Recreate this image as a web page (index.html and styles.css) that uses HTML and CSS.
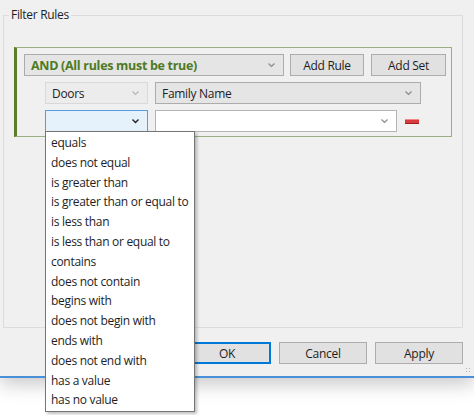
FILE: index.html
```html
<!DOCTYPE html>
<html lang="en">
<head>
    <meta charset="UTF-8">
    <title>Filter Rules</title>
    <link rel="stylesheet" href="styles.css">
</head>
<body>
    <div class="dialog">
        <fieldset class="group">
            <legend>Filter Rules</legend>

            <div class="rule-set">
                <div class="row">
                    <div class="combo combo-and">
                        <span class="combo-text">AND (All rules must be true)</span>
                        <svg class="chevron" width="7" height="5" viewBox="0 0 7 5"><path d="M0.5 0.5 L3.5 3.5 L6.5 0.5" fill="none" stroke="#8a8a8a" stroke-width="1.2"/></svg>
                    </div>
                    <button class="btn btn-add-rule">Add Rule</button>
                    <button class="btn btn-add-set">Add Set</button>
                </div>

                <div class="row indent">
                    <div class="combo combo-disabled combo-category">
                        <span class="combo-text">Doors</span>
                        <svg class="chevron" width="7" height="5" viewBox="0 0 7 5"><path d="M0.5 0.5 L3.5 3.5 L6.5 0.5" fill="none" stroke="#b5b5b5" stroke-width="1.2"/></svg>
                    </div>
                    <div class="combo combo-param">
                        <span class="combo-text">Family Name</span>
                        <svg class="chevron" width="7" height="5" viewBox="0 0 7 5"><path d="M0.5 0.5 L3.5 3.5 L6.5 0.5" fill="none" stroke="#8a8a8a" stroke-width="1.2"/></svg>
                    </div>
                </div>

                <div class="row indent">
                    <div class="combo combo-open combo-operator">
                        <span class="combo-text"></span>
                        <svg class="chevron" width="7" height="5" viewBox="0 0 7 5"><path d="M0.5 0.5 L3.5 3.5 L6.5 0.5" fill="none" stroke="#222" stroke-width="1.4"/></svg>

                        <ul class="dropdown">
                            <li>equals</li>
                            <li>does not equal</li>
                            <li>is greater than</li>
                            <li>is greater than or equal to</li>
                            <li>is less than</li>
                            <li>is less than or equal to</li>
                            <li>contains</li>
                            <li>does not contain</li>
                            <li>begins with</li>
                            <li>does not begin with</li>
                            <li>ends with</li>
                            <li>does not end with</li>
                            <li>has a value</li>
                            <li>has no value</li>
                        </ul>
                    </div>
                    <div class="combo combo-value">
                        <span class="combo-text"></span>
                        <svg class="chevron" width="7" height="5" viewBox="0 0 7 5"><path d="M0.5 0.5 L3.5 3.5 L6.5 0.5" fill="none" stroke="#8a8a8a" stroke-width="1.2"/></svg>
                    </div>
                    <span class="remove-rule"></span>
                </div>
            </div>
        </fieldset>

        <div class="footer">
            <button class="btn btn-footer btn-default">OK</button>
            <button class="btn btn-footer">Cancel</button>
            <button class="btn btn-footer">Apply</button>
        </div>
        <span class="grip"></span>
    </div>
</body>
</html>
```

FILE: styles.css
```css
body {
    margin: 0;
    background-color: #ffffff;
    font-family: 'Segoe UI', 'Open Sans', sans-serif;
    font-size: 12px;
    letter-spacing: -0.3px;
    color: #1e1e1e;
    width: 474px;
    height: 415px;
    overflow: hidden;
}
.dialog {
    position: relative;
    height: 378px;
    background-color: #f0f0f0;
    border-bottom: 2px solid #4a90d9;
    box-shadow: 0 6px 18px rgba(0, 0, 0, 0.22);
    padding-top: 7px;
    box-sizing: border-box;
}
.group {
    margin: 0 11px 0 3px;
    padding: 0 10px 0 10px;
    border: 1px solid #dcdcdc;
    height: 321px;
    box-sizing: border-box;
}
.group legend {
    padding: 0 2px;
    margin-left: -5px;
    line-height: 16px;
    color: #1e1e1e;
}
.rule-set {
    margin-top: 24px;
    border: 1px solid #9aaf82;
    border-left: 3px solid #5b7d2c;
    padding: 6px 5px 4px 7px;
    display: flex;
    flex-direction: column;
    gap: 6px;
}
.row {
    display: flex;
    align-items: center;
    gap: 7px;
}
.indent {
    padding-left: 21px;
}
.combo {
    position: relative;
    height: 22px;
    box-sizing: border-box;
    border: 1px solid #acacac;
    background-color: #e5e5e5;
    display: flex;
    align-items: center;
    justify-content: space-between;
    padding: 0 8px 0 6px;
}
.combo-text {
    white-space: nowrap;
}
.combo-and {
    width: 260px;
    margin-right: -1px;
}
.combo-and .combo-text {
    font-weight: bold;
    color: #4d7a22;
    font-size: 12.5px;
}
.combo-disabled {
    background-color: #ececec;
    border-color: #d9d9d9;
}
.combo-category {
    width: 103px;
}
.combo-param {
    width: 266px;
}
.combo-operator {
    width: 103px;
}
.combo-open {
    border-color: #569de5;
    background-color: #e5f1fb;
}
.combo-value {
    width: 242px;
    background-color: #ffffff;
    border-color: #b4b4b4;
}
.remove-rule {
    width: 14px;
    height: 3px;
    margin-left: 1px;
    background-color: #d83b3b;
    border-top: 1px solid #f08a8a;
    border-bottom: 1px solid #a02020;
}
.btn {
    font-family: inherit;
    font-size: 12px;
    letter-spacing: inherit;
    color: #1e1e1e;
    background-color: #e1e1e1;
    border: 1px solid #adadad;
    height: 22px;
    padding: 0;
    box-sizing: border-box;
}
.btn-add-rule {
    width: 74px;
}
.btn-add-set {
    width: 75px;
}
.dropdown {
    position: absolute;
    top: 20px;
    left: -1px;
    width: 148px;
    margin: 0;
    padding: 1px 0;
    list-style: none;
    background-color: #ffffff;
    border: 1px solid #767676;
    box-shadow: 2px 2px 3px rgba(0, 0, 0, 0.25);
    z-index: 2;
}
.dropdown li {
    height: 19.8px;
    line-height: 19.8px;
    padding-left: 5px;
    white-space: nowrap;
}
.footer {
    display: flex;
    justify-content: flex-end;
    gap: 8px;
    margin: 14px 11px 0 0;
}
.btn-footer {
    width: 88px;
    height: 22px;
}
.btn-default {
    border: 2px solid #0078d7;
}
.grip {
    position: absolute;
    right: 2px;
    bottom: 2px;
    width: 7px;
    height: 7px;
    background-image: radial-gradient(circle, #b0b0b0 0.8px, transparent 1px);
    background-size: 3px 3px;
}
```
